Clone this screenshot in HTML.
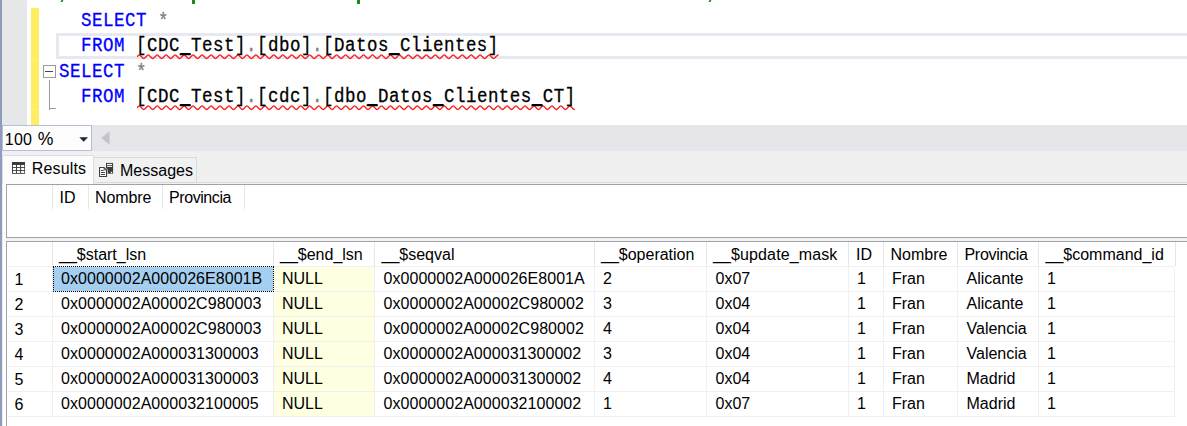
<!DOCTYPE html><html><head><meta charset="utf-8"><title>SSMS</title><style>
html,body{margin:0;padding:0}
body{width:1187px;height:426px;overflow:hidden;background:#fff;position:relative;font-family:"Liberation Sans",sans-serif;font-size:16px;color:#000}
div,span,svg{position:absolute}
.t{white-space:pre;line-height:25px;height:25px}
.code{font-family:"Liberation Mono",monospace;font-size:19.4px;letter-spacing:0.580px;-webkit-text-stroke:0.3px currentColor;transform:scaleX(0.9);transform-origin:0 0;line-height:25px;height:25px;white-space:pre;color:#000}
.code span{position:relative}
.u{top:2.3px;display:inline-block;transform:scaleX(1.0);-webkit-text-stroke:0.6px currentColor;text-shadow:0 -1px 0 #000}.as{top:1.5px}
.k{color:#0000ff}.g{color:#808080}
.vl{width:1px;background:#f0f0f0}
.vh{width:1px;background:#e6e6e6}
.hl{height:1px;background:#f0f0f0}
</style></head><body>
<div style="left:2px;top:0;width:25px;height:125px;background:#e6e7e8"></div>
<div style="left:31px;top:7.6px;width:8px;height:117.4px;background:#ffee62"></div>
<div style="left:60.6px;top:0;width:1.8px;height:2px;background:#1c8c1c;transform:skewX(-25deg)"></div>
<div style="left:192.4px;top:0;width:2.3px;height:3.8px;background:#1c8c1c;transform:skewX(0deg)"></div>
<div style="left:357.4px;top:0;width:2.3px;height:3.8px;background:#1c8c1c;transform:skewX(0deg)"></div>
<div style="left:709.4px;top:0;width:1.8px;height:2px;background:#1c8c1c;transform:skewX(-25deg)"></div>
<div style="left:56px;top:33px;width:1140px;height:20px;border:3px solid #e8e8f0;background:#fff"></div>
<svg style="left:137px;top:53.9px" width="367" height="6" viewBox="0 0 367 6"><path d="M0,2.9 Q1.38,0.9 2.30,0.9 C3.65,0.9 5.44,4.5 6.79,4.5 C8.13,4.5 9.92,0.9 11.27,0.9 C12.62,0.9 14.41,4.5 15.75,4.5 C17.10,4.5 18.89,0.9 20.24,0.9 C21.59,0.9 23.38,4.5 24.72,4.5 C26.07,4.5 27.86,0.9 29.21,0.9 C30.56,0.9 32.35,4.5 33.70,4.5 C35.04,4.5 36.83,0.9 38.18,0.9 C39.53,0.9 41.32,4.5 42.66,4.5 C44.01,4.5 45.80,0.9 47.15,0.9 C48.50,0.9 50.29,4.5 51.63,4.5 C52.98,4.5 54.77,0.9 56.12,0.9 C57.47,0.9 59.26,4.5 60.60,4.5 C61.95,4.5 63.74,0.9 65.09,0.9 C66.44,0.9 68.23,4.5 69.58,4.5 C70.92,4.5 72.71,0.9 74.06,0.9 C75.41,0.9 77.20,4.5 78.55,4.5 C79.89,4.5 81.68,0.9 83.03,0.9 C84.38,0.9 86.17,4.5 87.52,4.5 C88.86,4.5 90.65,0.9 92.00,0.9 C93.35,0.9 95.14,4.5 96.48,4.5 C97.83,4.5 99.62,0.9 100.97,0.9 C102.32,0.9 104.11,4.5 105.45,4.5 C106.80,4.5 108.59,0.9 109.94,0.9 C111.29,0.9 113.08,4.5 114.42,4.5 C115.77,4.5 117.56,0.9 118.91,0.9 C120.26,0.9 122.05,4.5 123.39,4.5 C124.74,4.5 126.53,0.9 127.88,0.9 C129.23,0.9 131.02,4.5 132.37,4.5 C133.71,4.5 135.50,0.9 136.85,0.9 C138.20,0.9 139.99,4.5 141.34,4.5 C142.68,4.5 144.47,0.9 145.82,0.9 C147.17,0.9 148.96,4.5 150.31,4.5 C151.65,4.5 153.44,0.9 154.79,0.9 C156.14,0.9 157.93,4.5 159.28,4.5 C160.62,4.5 162.41,0.9 163.76,0.9 C165.11,0.9 166.90,4.5 168.25,4.5 C169.59,4.5 171.38,0.9 172.73,0.9 C174.08,0.9 175.87,4.5 177.22,4.5 C178.56,4.5 180.35,0.9 181.70,0.9 C183.05,0.9 184.84,4.5 186.19,4.5 C187.53,4.5 189.32,0.9 190.67,0.9 C192.02,0.9 193.81,4.5 195.16,4.5 C196.50,4.5 198.29,0.9 199.64,0.9 C200.99,0.9 202.78,4.5 204.13,4.5 C205.47,4.5 207.26,0.9 208.61,0.9 C209.96,0.9 211.75,4.5 213.10,4.5 C214.44,4.5 216.23,0.9 217.58,0.9 C218.93,0.9 220.72,4.5 222.07,4.5 C223.41,4.5 225.20,0.9 226.55,0.9 C227.90,0.9 229.69,4.5 231.04,4.5 C232.38,4.5 234.17,0.9 235.52,0.9 C236.87,0.9 238.66,4.5 240.01,4.5 C241.35,4.5 243.14,0.9 244.49,0.9 C245.84,0.9 247.63,4.5 248.98,4.5 C250.32,4.5 252.11,0.9 253.46,0.9 C254.81,0.9 256.60,4.5 257.95,4.5 C259.29,4.5 261.08,0.9 262.43,0.9 C263.78,0.9 265.57,4.5 266.92,4.5 C268.26,4.5 270.05,0.9 271.40,0.9 C272.75,0.9 274.54,4.5 275.89,4.5 C277.23,4.5 279.02,0.9 280.37,0.9 C281.72,0.9 283.51,4.5 284.86,4.5 C286.20,4.5 287.99,0.9 289.34,0.9 C290.69,0.9 292.48,4.5 293.83,4.5 C295.17,4.5 296.96,0.9 298.31,0.9 C299.66,0.9 301.45,4.5 302.80,4.5 C304.14,4.5 305.93,0.9 307.28,0.9 C308.63,0.9 310.42,4.5 311.77,4.5 C313.11,4.5 314.90,0.9 316.25,0.9 C317.60,0.9 319.39,4.5 320.74,4.5 C322.08,4.5 323.87,0.9 325.22,0.9 C326.57,0.9 328.36,4.5 329.71,4.5 C331.05,4.5 332.84,0.9 334.19,0.9 C335.54,0.9 337.33,4.5 338.68,4.5 C340.02,4.5 341.81,0.9 343.16,0.9 C344.51,0.9 346.30,4.5 347.65,4.5 C348.99,4.5 350.78,0.9 352.13,0.9 C353.48,0.9 355.27,4.5 356.62,4.5 C357.96,4.5 359.75,0.9 361.10,0.9" fill="none" stroke="#ff1a1a" stroke-width="1.3" stroke-linejoin="round" stroke-linecap="round"/></svg>
<svg style="left:137px;top:104.6px" width="444" height="6" viewBox="0 0 444 6"><path d="M0,2.9 Q1.38,0.9 2.30,0.9 C3.65,0.9 5.44,4.5 6.79,4.5 C8.13,4.5 9.92,0.9 11.27,0.9 C12.62,0.9 14.41,4.5 15.75,4.5 C17.10,4.5 18.89,0.9 20.24,0.9 C21.59,0.9 23.38,4.5 24.72,4.5 C26.07,4.5 27.86,0.9 29.21,0.9 C30.56,0.9 32.35,4.5 33.70,4.5 C35.04,4.5 36.83,0.9 38.18,0.9 C39.53,0.9 41.32,4.5 42.66,4.5 C44.01,4.5 45.80,0.9 47.15,0.9 C48.50,0.9 50.29,4.5 51.63,4.5 C52.98,4.5 54.77,0.9 56.12,0.9 C57.47,0.9 59.26,4.5 60.60,4.5 C61.95,4.5 63.74,0.9 65.09,0.9 C66.44,0.9 68.23,4.5 69.58,4.5 C70.92,4.5 72.71,0.9 74.06,0.9 C75.41,0.9 77.20,4.5 78.55,4.5 C79.89,4.5 81.68,0.9 83.03,0.9 C84.38,0.9 86.17,4.5 87.52,4.5 C88.86,4.5 90.65,0.9 92.00,0.9 C93.35,0.9 95.14,4.5 96.48,4.5 C97.83,4.5 99.62,0.9 100.97,0.9 C102.32,0.9 104.11,4.5 105.45,4.5 C106.80,4.5 108.59,0.9 109.94,0.9 C111.29,0.9 113.08,4.5 114.42,4.5 C115.77,4.5 117.56,0.9 118.91,0.9 C120.26,0.9 122.05,4.5 123.39,4.5 C124.74,4.5 126.53,0.9 127.88,0.9 C129.23,0.9 131.02,4.5 132.37,4.5 C133.71,4.5 135.50,0.9 136.85,0.9 C138.20,0.9 139.99,4.5 141.34,4.5 C142.68,4.5 144.47,0.9 145.82,0.9 C147.17,0.9 148.96,4.5 150.31,4.5 C151.65,4.5 153.44,0.9 154.79,0.9 C156.14,0.9 157.93,4.5 159.28,4.5 C160.62,4.5 162.41,0.9 163.76,0.9 C165.11,0.9 166.90,4.5 168.25,4.5 C169.59,4.5 171.38,0.9 172.73,0.9 C174.08,0.9 175.87,4.5 177.22,4.5 C178.56,4.5 180.35,0.9 181.70,0.9 C183.05,0.9 184.84,4.5 186.19,4.5 C187.53,4.5 189.32,0.9 190.67,0.9 C192.02,0.9 193.81,4.5 195.16,4.5 C196.50,4.5 198.29,0.9 199.64,0.9 C200.99,0.9 202.78,4.5 204.13,4.5 C205.47,4.5 207.26,0.9 208.61,0.9 C209.96,0.9 211.75,4.5 213.10,4.5 C214.44,4.5 216.23,0.9 217.58,0.9 C218.93,0.9 220.72,4.5 222.07,4.5 C223.41,4.5 225.20,0.9 226.55,0.9 C227.90,0.9 229.69,4.5 231.04,4.5 C232.38,4.5 234.17,0.9 235.52,0.9 C236.87,0.9 238.66,4.5 240.01,4.5 C241.35,4.5 243.14,0.9 244.49,0.9 C245.84,0.9 247.63,4.5 248.98,4.5 C250.32,4.5 252.11,0.9 253.46,0.9 C254.81,0.9 256.60,4.5 257.95,4.5 C259.29,4.5 261.08,0.9 262.43,0.9 C263.78,0.9 265.57,4.5 266.92,4.5 C268.26,4.5 270.05,0.9 271.40,0.9 C272.75,0.9 274.54,4.5 275.89,4.5 C277.23,4.5 279.02,0.9 280.37,0.9 C281.72,0.9 283.51,4.5 284.86,4.5 C286.20,4.5 287.99,0.9 289.34,0.9 C290.69,0.9 292.48,4.5 293.83,4.5 C295.17,4.5 296.96,0.9 298.31,0.9 C299.66,0.9 301.45,4.5 302.80,4.5 C304.14,4.5 305.93,0.9 307.28,0.9 C308.63,0.9 310.42,4.5 311.77,4.5 C313.11,4.5 314.90,0.9 316.25,0.9 C317.60,0.9 319.39,4.5 320.74,4.5 C322.08,4.5 323.87,0.9 325.22,0.9 C326.57,0.9 328.36,4.5 329.71,4.5 C331.05,4.5 332.84,0.9 334.19,0.9 C335.54,0.9 337.33,4.5 338.68,4.5 C340.02,4.5 341.81,0.9 343.16,0.9 C344.51,0.9 346.30,4.5 347.65,4.5 C348.99,4.5 350.78,0.9 352.13,0.9 C353.48,0.9 355.27,4.5 356.62,4.5 C357.96,4.5 359.75,0.9 361.10,0.9 C362.45,0.9 364.24,4.5 365.59,4.5 C366.93,4.5 368.72,0.9 370.07,0.9 C371.42,0.9 373.21,4.5 374.56,4.5 C375.90,4.5 377.69,0.9 379.04,0.9 C380.39,0.9 382.18,4.5 383.53,4.5 C384.87,4.5 386.66,0.9 388.01,0.9 C389.36,0.9 391.15,4.5 392.50,4.5 C393.84,4.5 395.63,0.9 396.98,0.9 C398.33,0.9 400.12,4.5 401.47,4.5 C402.81,4.5 404.60,0.9 405.95,0.9 C407.30,0.9 409.09,4.5 410.44,4.5 C411.78,4.5 413.57,0.9 414.92,0.9 C416.27,0.9 418.06,4.5 419.41,4.5 C420.75,4.5 422.54,0.9 423.89,0.9 C425.24,0.9 427.03,4.5 428.38,4.5 C429.72,4.5 431.51,0.9 432.86,0.9 C434.21,0.9 436.00,4.5 437.35,4.5" fill="none" stroke="#ff1a1a" stroke-width="1.3" stroke-linejoin="round" stroke-linecap="round"/></svg>
<div class="code" style="left:80.9px;top:8.8px"><span class="k">SELECT</span> <span class="g as">*</span></div>
<div class="code" style="left:80.9px;top:34.2px"><span class="k">FROM</span> [CDC<span class="u">_</span>Test]<span class="g">.</span>[dbo]<span class="g">.</span>[Datos<span class="u">_</span>Clientes]</div>
<div class="code" style="left:58.9px;top:59.5px"><span class="k">SELECT</span> <span class="g as">*</span></div>
<div class="code" style="left:80.9px;top:84.6px"><span class="k">FROM</span> [CDC<span class="u">_</span>Test]<span class="g">.</span>[cdc]<span class="g">.</span>[dbo<span class="u">_</span>Datos<span class="u">_</span>Clientes<span class="u">_</span>CT]</div>
<div style="left:43px;top:65px;width:11px;height:11px;border:1px solid #9a9a9a;background:#fff"></div>
<div style="left:45.3px;top:70.7px;width:8px;height:1.5px;background:#444"></div>
<div style="left:49.2px;top:80px;width:1.3px;height:29.5px;background:#9c9c9c"></div>
<div style="left:49.2px;top:108.2px;width:6.5px;height:1.3px;background:#9c9c9c"></div>
<div style="left:31px;top:58.5px;width:8px;height:1px;background:#fff27a"></div>
<div style="left:31px;top:109px;width:8px;height:1px;background:#fff27a"></div>
<div style="left:2px;top:125px;width:1185px;height:26px;background:#e6e6ea"></div>
<div style="left:2px;top:125px;width:88px;height:24px;border:1px solid #b4bfdc;background:#fdfdfe"></div>
<div class="t" style="left:4.8px;top:126.5px;letter-spacing:0.2px">100</div>
<div class="t" style="left:37.8px;top:127.3px;font-size:17.6px">%</div>
<svg style="left:79px;top:136.5px" width="10" height="6" viewBox="0 0 10 6"><polygon points="0.3,0.3 9,0.3 4.65,4.8" fill="#1e2336"/></svg>
<svg style="left:101px;top:131px" width="9" height="14" viewBox="0 0 9 14"><polygon points="8.5,0.3 8.5,13.7 0.3,7" fill="#c2c3cc"/></svg>
<div style="left:2px;top:151px;width:1185px;height:33px;background:#f0f0f0"></div>
<div style="left:2px;top:182px;width:1185px;height:1px;background:#dcdcdc"></div>
<div style="left:93px;top:157px;width:102px;height:24px;border:1px solid #dadada;background:#f1f1f1"></div>
<div style="left:2px;top:155px;width:90px;height:29px;border:1px solid #dedede;border-bottom:none;background:#fcfcfc"></div>
<svg style="left:12px;top:162px" width="13" height="12" viewBox="0 0 13 12"><rect x="0" y="0" width="13" height="11.8" fill="#3b3b3b"/><g fill="#fff"><rect x="0.95" y="3.0" width="3.1" height="2.05"/><rect x="5.0" y="3.0" width="3.1" height="2.05"/><rect x="9.15" y="3.0" width="3.1" height="2.05"/><rect x="0.95" y="5.95" width="3.1" height="2.05"/><rect x="5.0" y="5.95" width="3.1" height="2.05"/><rect x="9.15" y="5.95" width="3.1" height="2.05"/><rect x="0.95" y="8.9" width="3.1" height="2.05"/><rect x="5.0" y="8.9" width="3.1" height="2.05"/><rect x="9.15" y="8.9" width="3.1" height="2.05"/></g></svg>
<div class="t" style="left:31.8px;top:155.5px;letter-spacing:0.15px">Results</div>
<svg style="left:98px;top:162px" width="17" height="17" viewBox="98 162 17 17"><rect x="105.5" y="162.4" width="8.1" height="11.85" fill="#fafafa"/><rect x="106" y="162.9" width="7.1" height="10.85" fill="#3c3c3c"/><rect x="107" y="163.9" width="5.1" height="1.15" fill="#fff"/><rect x="107" y="165.85" width="5.1" height="1.05" fill="#fff"/><rect x="110.8" y="171.8" width="1.4" height="1.4" fill="#fff"/><path d="M99.55,167.55 h4.6 l2.4,2.4 v6.5 h-7 z" fill="#fff" stroke="#fafafa" stroke-width="2.2"/><path d="M99.55,167.55 h4.6 l2.4,2.4 v6.5 h-7 z" fill="#fff" stroke="#3c3c3c" stroke-width="1.1" stroke-linejoin="round"/><path d="M104.1,167.6 v2.4 h2.4" fill="none" stroke="#3c3c3c" stroke-width="0.8"/><rect x="101" y="170" width="2.6" height="0.95" fill="#3c3c3c"/><rect x="101" y="172" width="4" height="0.95" fill="#3c3c3c"/><rect x="101" y="174" width="4" height="0.95" fill="#3c3c3c"/></svg>
<div class="t" style="left:120px;top:158px">Messages</div>
<div style="left:6px;top:184px;width:1190px;height:52px;border:1px solid #a1a1a9;background:#fff"></div>
<div class="vh" style="left:52px;top:185px;height:24px"></div>
<div class="vh" style="left:88px;top:185px;height:24px"></div>
<div class="vh" style="left:162px;top:185px;height:24px"></div>
<div class="vh" style="left:244px;top:185px;height:24px"></div>
<div class="t" style="left:59.5px;top:185px;letter-spacing:0px">ID</div>
<div class="t" style="left:95px;top:185px;letter-spacing:-0.1px">Nombre</div>
<div class="t" style="left:169px;top:185px;letter-spacing:-0.42px">Provincia</div>
<div style="left:6px;top:238px;width:1181px;height:3px;background:#f2f2f2"></div>
<div style="left:2px;top:184px;width:4px;height:242px;background:#fefefe"></div>
<div style="left:2px;top:184px;width:1px;height:242px;background:#ececea"></div>
<div style="left:6px;top:241px;width:1190px;height:200px;border:1px solid #a1a1a9;background:#fff"></div>
<div style="left:274px;top:267px;width:100px;height:149px;background:#ffffe1"></div>
<div class="hl" style="left:7px;top:266px;width:1168px"></div>
<div class="hl" style="left:7px;top:291px;width:1168px"></div>
<div class="hl" style="left:7px;top:316px;width:1168px"></div>
<div class="hl" style="left:7px;top:341px;width:1168px"></div>
<div class="hl" style="left:7px;top:366px;width:1168px"></div>
<div class="hl" style="left:7px;top:391px;width:1168px"></div>
<div class="hl" style="left:7px;top:416px;width:1168px"></div>
<div class="vh" style="left:52px;top:242px;height:24px"></div>
<div class="vl" style="left:52px;top:266px;height:151px"></div>
<div class="vh" style="left:273px;top:242px;height:24px"></div>
<div class="vl" style="left:273px;top:266px;height:151px"></div>
<div class="vh" style="left:374px;top:242px;height:24px"></div>
<div class="vl" style="left:374px;top:266px;height:151px"></div>
<div class="vh" style="left:594px;top:242px;height:24px"></div>
<div class="vl" style="left:594px;top:266px;height:151px"></div>
<div class="vh" style="left:706px;top:242px;height:24px"></div>
<div class="vl" style="left:706px;top:266px;height:151px"></div>
<div class="vh" style="left:848px;top:242px;height:24px"></div>
<div class="vl" style="left:848px;top:266px;height:151px"></div>
<div class="vh" style="left:883px;top:242px;height:24px"></div>
<div class="vl" style="left:883px;top:266px;height:151px"></div>
<div class="vh" style="left:957px;top:242px;height:24px"></div>
<div class="vl" style="left:957px;top:266px;height:151px"></div>
<div class="vh" style="left:1038px;top:242px;height:24px"></div>
<div class="vl" style="left:1038px;top:266px;height:151px"></div>
<div class="vh" style="left:1175px;top:242px;height:24px"></div>
<div class="vl" style="left:1174px;top:266px;height:151px"></div>
<div style="left:53px;top:267px;width:220px;height:24px;background:#a5cff1"></div>
<div style="left:53px;top:266px;width:219px;height:24px;border:1px dotted #000"></div>
<div class="t" style="left:59px;top:241.5px;letter-spacing:0px">__$start_lsn</div>
<div class="t" style="left:280px;top:241.5px;letter-spacing:0px">__$end_lsn</div>
<div class="t" style="left:381.5px;top:241.5px;letter-spacing:0px">__$seqval</div>
<div class="t" style="left:601px;top:241.5px;letter-spacing:0px">__$operation</div>
<div class="t" style="left:713px;top:241.5px;letter-spacing:0.12px">__$update_mask</div>
<div class="t" style="left:856px;top:241.5px;letter-spacing:0px">ID</div>
<div class="t" style="left:890.5px;top:241.5px;letter-spacing:0px">Nombre</div>
<div class="t" style="left:964.5px;top:241.5px;letter-spacing:-0.3px">Provincia</div>
<div class="t" style="left:1045.5px;top:241.5px;letter-spacing:0px">__$command_id</div>
<div class="t" style="left:14.5px;top:267px">1</div>
<div class="t" style="left:61px;top:266px;letter-spacing:0.05px">0x0000002A000026E8001B</div>
<div class="t" style="left:282px;top:266px">NULL</div>
<div class="t" style="left:383.5px;top:266px;letter-spacing:0.05px">0x0000002A000026E8001A</div>
<div class="t" style="left:603px;top:266px">2</div>
<div class="t" style="left:715.5px;top:266px">0x07</div>
<div class="t" style="left:857px;top:266px">1</div>
<div class="t" style="left:892px;top:266px">Fran</div>
<div class="t" style="left:966.5px;top:266px">Alicante</div>
<div class="t" style="left:1047px;top:266px">1</div>
<div class="t" style="left:14.5px;top:292px">2</div>
<div class="t" style="left:61px;top:291px;letter-spacing:0.05px">0x0000002A00002C980003</div>
<div class="t" style="left:282px;top:291px">NULL</div>
<div class="t" style="left:383.5px;top:291px;letter-spacing:0.05px">0x0000002A00002C980002</div>
<div class="t" style="left:603px;top:291px">3</div>
<div class="t" style="left:715.5px;top:291px">0x04</div>
<div class="t" style="left:857px;top:291px">1</div>
<div class="t" style="left:892px;top:291px">Fran</div>
<div class="t" style="left:966.5px;top:291px">Alicante</div>
<div class="t" style="left:1047px;top:291px">1</div>
<div class="t" style="left:14.5px;top:317px">3</div>
<div class="t" style="left:61px;top:316px;letter-spacing:0.05px">0x0000002A00002C980003</div>
<div class="t" style="left:282px;top:316px">NULL</div>
<div class="t" style="left:383.5px;top:316px;letter-spacing:0.05px">0x0000002A00002C980002</div>
<div class="t" style="left:603px;top:316px">4</div>
<div class="t" style="left:715.5px;top:316px">0x04</div>
<div class="t" style="left:857px;top:316px">1</div>
<div class="t" style="left:892px;top:316px">Fran</div>
<div class="t" style="left:966.5px;top:316px">Valencia</div>
<div class="t" style="left:1047px;top:316px">1</div>
<div class="t" style="left:14.5px;top:342px">4</div>
<div class="t" style="left:61px;top:341px;letter-spacing:0.05px">0x0000002A000031300003</div>
<div class="t" style="left:282px;top:341px">NULL</div>
<div class="t" style="left:383.5px;top:341px;letter-spacing:0.05px">0x0000002A000031300002</div>
<div class="t" style="left:603px;top:341px">3</div>
<div class="t" style="left:715.5px;top:341px">0x04</div>
<div class="t" style="left:857px;top:341px">1</div>
<div class="t" style="left:892px;top:341px">Fran</div>
<div class="t" style="left:966.5px;top:341px">Valencia</div>
<div class="t" style="left:1047px;top:341px">1</div>
<div class="t" style="left:14.5px;top:367px">5</div>
<div class="t" style="left:61px;top:366px;letter-spacing:0.05px">0x0000002A000031300003</div>
<div class="t" style="left:282px;top:366px">NULL</div>
<div class="t" style="left:383.5px;top:366px;letter-spacing:0.05px">0x0000002A000031300002</div>
<div class="t" style="left:603px;top:366px">4</div>
<div class="t" style="left:715.5px;top:366px">0x04</div>
<div class="t" style="left:857px;top:366px">1</div>
<div class="t" style="left:892px;top:366px">Fran</div>
<div class="t" style="left:966.5px;top:366px">Madrid</div>
<div class="t" style="left:1047px;top:366px">1</div>
<div class="t" style="left:14.5px;top:392px">6</div>
<div class="t" style="left:61px;top:391px;letter-spacing:0.05px">0x0000002A000032100005</div>
<div class="t" style="left:282px;top:391px">NULL</div>
<div class="t" style="left:383.5px;top:391px;letter-spacing:0.05px">0x0000002A000032100002</div>
<div class="t" style="left:603px;top:391px">1</div>
<div class="t" style="left:715.5px;top:391px">0x07</div>
<div class="t" style="left:857px;top:391px">1</div>
<div class="t" style="left:892px;top:391px">Fran</div>
<div class="t" style="left:966.5px;top:391px">Madrid</div>
<div class="t" style="left:1047px;top:391px">1</div>
<div style="left:0;top:0;width:2px;height:426px;background:#8e9bbc"></div>
</body></html>
